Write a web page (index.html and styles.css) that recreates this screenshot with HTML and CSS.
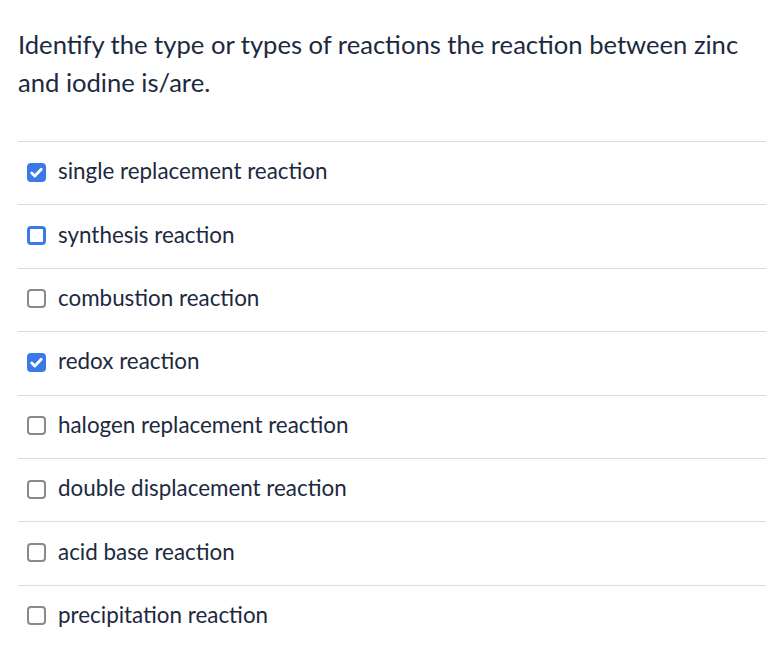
FILE: index.html
```html
<!DOCTYPE html>
<html lang="en">
<head>
    <meta charset="UTF-8">
    <title>Question</title>
    <link rel="stylesheet" href="styles.css">
</head>
<body>
    <main class="question">
        <p class="prompt">Identify the type or types of reactions the reaction between zinc and iodine is/are.</p>

        <ul class="answers">
            <li class="answer">
                <label><span class="box checked"><svg viewBox="0 0 20 20"><path d="M5 10.5l3.2 3.2L15 6.5" /></svg></span>single replacement reaction</label>
            </li>
            <li class="answer">
                <label><span class="box focused"></span>synthesis reaction</label>
            </li>
            <li class="answer">
                <label><span class="box"></span>combustion reaction</label>
            </li>
            <li class="answer">
                <label><span class="box checked"><svg viewBox="0 0 20 20"><path d="M5 10.5l3.2 3.2L15 6.5" /></svg></span>redox reaction</label>
            </li>
            <li class="answer">
                <label><span class="box"></span>halogen replacement reaction</label>
            </li>
            <li class="answer">
                <label><span class="box"></span>double displacement reaction</label>
            </li>
            <li class="answer">
                <label><span class="box"></span>acid base reaction</label>
            </li>
            <li class="answer">
                <label><span class="box"></span>precipitation reaction</label>
            </li>
        </ul>
    </main>
</body>
</html>
```

FILE: styles.css
```css
body {
    margin: 0;
    background: #fff;
    font-family: Lato, "Open Sans", sans-serif;
    color: #1c2940;
}
.question {
    padding: 25px 2px 0 18px;
}
.prompt {
    margin: 0 0 40px;
    font-size: 25.6px;
    line-height: 38px;
    max-width: 740px;
}
.answers {
    list-style: none;
    margin: 0;
    padding: 0;
    border-top: 1px solid #dcdcdc;
}
.answer {
    border-bottom: 1px solid #dcdcdc;
    height: 62.4px;
    display: flex;
    align-items: center;
}
.answer:last-child {
    border-bottom: none;
}
.answer label {
    display: flex;
    align-items: center;
    font-size: 22.4px;
    line-height: 26px;
    padding-left: 9px;
    margin-top: -4px;
}
.box {
    width: 15px;
    height: 15px;
    border: 2px solid #8a8a8a;
    border-radius: 4px;
    margin-right: 12px;
    margin-top: 2px;
    display: flex;
    align-items: center;
    justify-content: center;
}
.box.focused {
    border: 3px solid #3a7ae8;
    width: 13px;
    height: 13px;
}
.box.checked {
    background: #3a7ae8;
    border-color: #3a7ae8;
}
.box svg {
    width: 19px;
    height: 19px;
    flex: none;
    fill: none;
    stroke: #fff;
    stroke-width: 3;
    stroke-linecap: round;
    stroke-linejoin: round;
}
```
